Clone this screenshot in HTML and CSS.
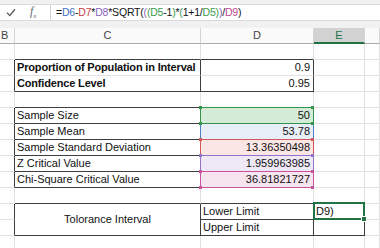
FILE: index.html
```html
<!DOCTYPE html>
<html lang="en">
<head>
    <meta charset="UTF-8">
    <title>Tolerance Interval</title>
    <link rel="stylesheet" href="styles.css">
</head>
<body>
    <div class="topbar">
        <div class="fbar">
            <div class="fbar-btns">
                <svg class="check" width="10" height="9" viewBox="0 0 10 9"><path d="M1 4.8 L3.8 7.5 L9 1.2" fill="none" stroke="#5f5f5f" stroke-width="1.4"/></svg>
                <span class="fx">f<sub>x</sub></span>
            </div>
            <div class="formula">=<span class="c-blue">D6</span>-<span class="c-red">D7</span>*<span class="c-purple">D8</span>*SQRT(<span class="c-purple">(</span><span class="c-green">(D5</span>-1<span class="c-green">)</span>*<span class="c-green">(</span>1+1/<span class="c-green">D5)</span><span class="c-purple">)</span>/<span class="c-pink">D9</span>)</div>
        </div>
    </div>

    <div class="sheet">
        <!-- column headers -->
        <div class="hd">B</div>
        <div class="hd">C</div>
        <div class="hd">D</div>
        <div class="hd hd-sel">E</div>
        <div class="hd"></div>

        <!-- row 1 -->
        <div class="cell"></div>
        <div class="cell bb"></div>
        <div class="cell bb"></div>
        <div class="cell"></div>
        <div class="cell"></div>

        <!-- row 2 -->
        <div class="cell br"></div>
        <div class="cell br bold">Proportion of Population in Interval</div>
        <div class="cell br num">0.9</div>
        <div class="cell"></div>
        <div class="cell"></div>

        <!-- row 3 -->
        <div class="cell br"></div>
        <div class="cell br bb bold">Confidence Level</div>
        <div class="cell br bb num">0.95</div>
        <div class="cell"></div>
        <div class="cell"></div>

        <!-- row 4 -->
        <div class="cell"></div>
        <div class="cell bb"></div>
        <div class="cell bb"></div>
        <div class="cell"></div>
        <div class="cell"></div>

        <!-- rows 5-9 -->
        <div class="cell br"></div>
        <div class="cell br bb">Sample Size</div>
        <div class="cell br bb num hl hl-green">50</div>
        <div class="cell"></div>
        <div class="cell"></div>

        <div class="cell br"></div>
        <div class="cell br bb">Sample Mean</div>
        <div class="cell br bb num hl hl-blue">53.78</div>
        <div class="cell"></div>
        <div class="cell"></div>

        <div class="cell br"></div>
        <div class="cell br bb">Sample Standard Deviation</div>
        <div class="cell br bb num hl hl-red">13.36350498</div>
        <div class="cell"></div>
        <div class="cell"></div>

        <div class="cell br"></div>
        <div class="cell br bb">Z Critical Value</div>
        <div class="cell br bb num hl hl-purple">1.959963985</div>
        <div class="cell"></div>
        <div class="cell"></div>

        <div class="cell br"></div>
        <div class="cell br bb">Chi-Square Critical Value</div>
        <div class="cell br bb num hl hl-pink">36.81821727</div>
        <div class="cell"></div>
        <div class="cell"></div>

        <!-- row 10 -->
        <div class="cell"></div>
        <div class="cell bb"></div>
        <div class="cell bb"></div>
        <div class="cell bb"></div>
        <div class="cell"></div>

        <!-- rows 11-12 -->
        <div class="cell br"></div>
        <div class="cell br bb merged">Tolorance Interval</div>
        <div class="cell br bb">Lower Limit</div>
        <div class="cell br bb active">D9)</div>
        <div class="cell"></div>

        <div class="cell br"></div>
        <div class="cell br bb">Upper Limit</div>
        <div class="cell br bb"></div>
        <div class="cell"></div>

        <!-- row 13 -->
        <div class="cell"></div>
        <div class="cell"></div>
        <div class="cell"></div>
        <div class="cell"></div>
        <div class="cell"></div>
    </div>
</body>
</html>
```

FILE: styles.css
```css
/* sheet */
body {
    margin: 0;
    background-color: #fff;
    font-family: "Liberation Sans", Arial, sans-serif;
    font-size: 11px;
    color: #111;
    overflow: hidden;
}
.topbar {
    height: 28px;
    background-color: #f1f1f1;
    padding-top: 4px;
    box-sizing: border-box;
}
.fbar {
    display: flex;
    height: 17px;
    background-color: #fff;
    border-top: 1px solid #dadada;
    border-bottom: 1px solid #dadada;
    box-sizing: border-box;
}
.fbar-btns {
    width: 51px;
    display: flex;
    align-items: center;
    gap: 14px;
    padding-left: 6px;
    box-sizing: border-box;
    border-right: 1px solid #d4d4d4;
}
.fx {
    font-family: "Liberation Serif", serif;
    font-style: italic;
    font-size: 12px;
    color: #6b6b6b;
    line-height: 1;
}
.fx sub {
    font-size: 7px;
}
.formula {
    padding-left: 5px;
    line-height: 15px;
    font-size: 10.5px;
    letter-spacing: -0.2px;
    white-space: nowrap;
}
.c-blue { color: #3f6fc3; }
.c-red { color: #c4413d; }
.c-purple { color: #8a5fbf; }
.c-green { color: #3c9b4a; }
.c-pink { color: #c2458f; }

.sheet {
    display: grid;
    grid-template-columns: 15px 186px 113px 51px 15px;
    grid-auto-rows: 16px;
}
.hd {
    background-color: #fafafa;
    border-right: 1px solid #d4d4d4;
    border-bottom: 1px solid #ababab;
    text-align: center;
    line-height: 15px;
    font-size: 11px;
    color: #444;
}
.hd:first-child {
    text-align: left;
    padding-left: 1px;
}
.hd-sel {
    background-color: #d2d2d2;
    color: #217346;
    border-bottom: 2px solid #217346;
    line-height: 14px;
}
.cell {
    position: relative;
    border-right: 1px solid #e1e1e1;
    border-bottom: 1px solid #e1e1e1;
    padding: 0 2px;
    line-height: 15px;
    white-space: nowrap;
    overflow: visible;
}
.cell.bb { border-bottom-color: #3d3d3d; }
.cell.br { border-right-color: #3d3d3d; }
.bold {
    font-weight: bold;
    letter-spacing: -0.17px;
}
.num {
    text-align: right;
    padding-right: 3px;
}
.merged {
    grid-row: span 2;
    display: flex;
    align-items: center;
    justify-content: center;
}

/* referenced cell highlights */
.hl::before {
    content: "";
    position: absolute;
    top: -1px;
    left: -1px;
    right: -1px;
    bottom: -1px;
    border: 1px solid var(--hc);
    z-index: var(--hz);
    pointer-events: none;
}
.hl::after {
    content: "";
    position: absolute;
    top: -2px;
    left: -2px;
    width: 3px;
    height: 3px;
    background-color: var(--hc);
    box-shadow: 112px 0 0 var(--hc), 0 16px 0 var(--hc), 112px 16px 0 var(--hc);
    z-index: var(--hz);
}
.hl-blue { background-color: #e8eef8; --hc: #4f7fc7; --hz: 1; }
.hl-blue::after { display: none; }
.hl-red { background-color: #fbe6e6; --hc: #d0585a; --hz: 2; }
.hl-purple { background-color: #efe9f7; --hc: #9373c8; --hz: 3; }
.hl-green { background-color: #d4ebd7; --hc: #34934a; --hz: 4; }
.hl-pink { background-color: #f6e4ef; --hc: #c9529c; --hz: 5; }

/* active cell */
.active::before {
    content: "";
    position: absolute;
    top: -2px;
    left: -1px;
    right: -1px;
    bottom: -1px;
    border: 2px solid #217346;
    z-index: 6;
}
.active::after {
    content: "";
    position: absolute;
    right: -3px;
    bottom: -3px;
    width: 4px;
    height: 4px;
    background-color: #217346;
    border: 1px solid #fff;
    z-index: 7;
}
```
